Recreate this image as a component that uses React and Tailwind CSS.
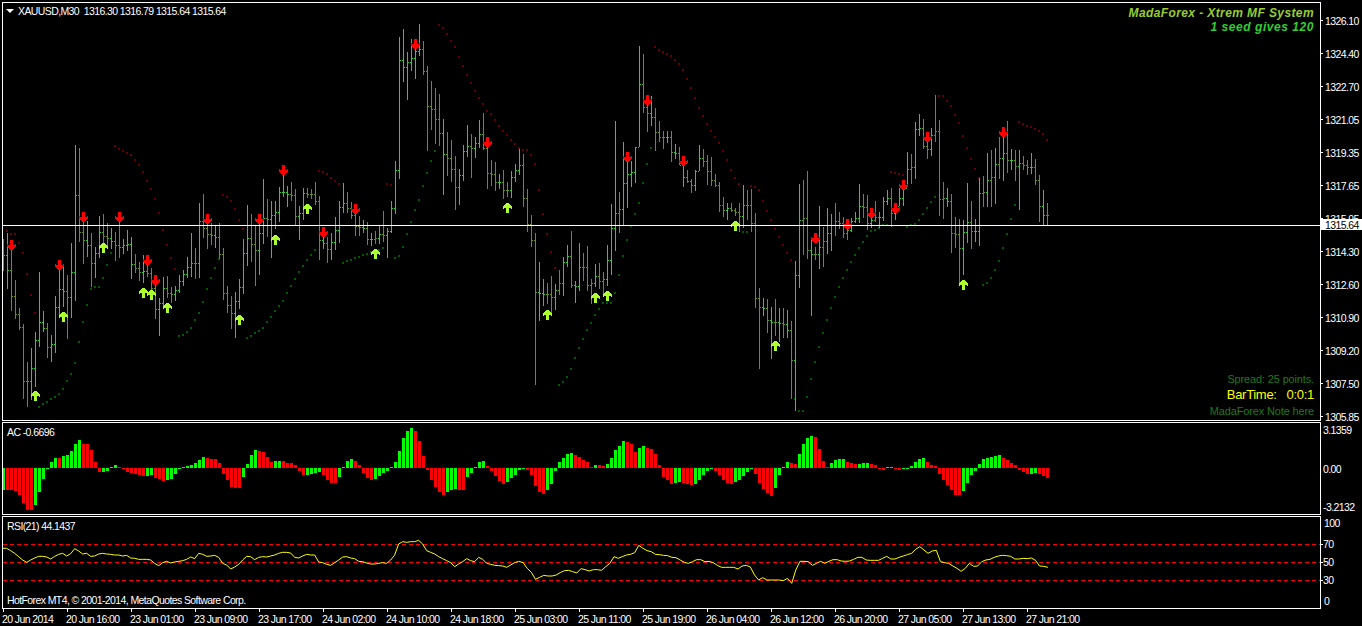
// MT4 chart: XAUUSD M30 with AC and RSI sub windows
const UP = '#32cd32';
const DOWN = '#6b8e23';

// high, low, up
const bars = [
  [239,271,0],[233,289,1],[250,311,0],[280,319,0],[308,330,0],[324,399,0],[362,407,0],[348,400,1],[332,387,1],[272,347,1],
  [311,332,1],[323,358,0],[335,362,1],[296,353,1],[270,317,1],[267,307,1],[275,339,0],[243,318,1],[145,301,1],[148,242,0],
  [222,264,0],[221,257,1],[233,287,0],[247,278,1],[216,258,1],[214,248,0],[223,248,0],[228,249,1],[232,261,0],[220,258,0],
  [239,254,1],[230,251,1],[237,279,1],[254,273,0],[262,281,0],[255,283,1],[265,277,0],[268,292,0],[284,319,0],[298,336,1],
  [277,307,1],[276,298,0],[287,303,0],[286,301,1],[275,293,1],[270,286,1],[257,278,1],[233,277,1],[248,279,0],[203,278,1],
  [194,238,0],[217,249,0],[223,245,0],[225,248,1],[223,259,0],[248,300,0],[286,313,0],[296,329,0],[292,338,1],[279,309,1],
  [239,294,1],[205,266,1],[214,262,0],[225,286,0],[222,275,1],[179,244,1],[199,237,0],[201,258,1],[201,229,1],[187,222,1],
  [175,197,1],[186,207,1],[182,201,0],[189,226,0],[206,240,1],[188,220,1],[188,198,0],[189,199,0],[182,205,0],[196,260,0],
  [230,249,1],[237,263,0],[233,260,1],[217,250,1],[201,243,1],[183,213,1],[192,213,0],[202,219,0],[210,236,0],[216,236,0],
  [220,233,1],[222,245,0],[233,246,1],[231,244,0],[225,244,1],[211,242,0],[228,258,1],[201,233,1],[161,214,1],[37,179,1],
  [29,82,1],[52,100,1],[39,71,1],[45,79,1],[24,56,1],[41,75,0],[66,151,0],[81,130,0],[88,144,0],[94,146,0],
  [119,195,1],[132,176,0],[140,182,0],[156,210,0],[169,205,1],[145,181,1],[125,157,1],[134,178,0],[137,158,1],[120,148,1],
  [113,150,0],[145,189,0],[160,186,0],[162,191,0],[174,189,1],[170,199,0],[182,197,0],[171,198,1],[164,182,1],[149,175,1],
  [154,207,0],[189,232,0],[215,247,0],[233,385,0],[262,321,1],[279,306,1],[283,304,0],[276,314,0],[284,310,1],[270,295,0],
  [257,296,1],[245,267,1],[231,288,0],[281,303,1],[243,291,1],[253,281,0],[246,291,0],[279,304,0],[264,287,1],[263,289,0],
  [272,294,0],[245,286,1],[204,275,1],[121,251,1],[192,233,0],[142,225,1],[157,208,1],[161,187,1],[147,183,1],[46,147,1],
  [54,113,0],[100,132,0],[96,126,1],[108,151,0],[121,142,0],[131,149,0],[131,143,1],[131,162,0],[144,159,1],[147,165,0],
  [165,187,1],[170,183,0],[179,193,0],[170,191,1],[145,171,1],[149,167,0],[155,185,0],[157,186,0],[174,187,0],[182,212,0],
  [197,217,0],[203,220,1],[203,212,0],[208,216,0],[203,232,0],[185,228,1],[190,220,0],[189,232,0],[213,308,0],[288,369,0],
  [298,316,1],[299,333,0],[307,359,1],[299,336,0],[308,342,1],[308,338,0],[310,338,1],[321,399,0],[261,411,1],[184,288,1],
  [180,255,0],[171,259,0],[240,316,1],[247,260,0],[206,269,1],[227,267,0],[208,254,1],[214,251,1],[203,236,0],[212,229,0],
  [217,238,0],[228,240,0],[218,232,1],[212,223,1],[184,223,1],[194,218,0],[195,230,0],[218,228,1],[201,222,0],[212,228,1],
  [197,221,1],[190,205,1],[188,227,0],[205,220,1],[188,206,1],[190,206,1],[152,185,1],[154,184,0],[122,179,1],[114,136,1],
  [119,149,0],[142,159,0],[128,156,1],[95,142,0],[120,216,0],[182,219,0],[188,207,1],[194,253,0],[217,248,0],[219,284,0],
  [220,275,1],[183,243,1],[201,249,0],[219,242,1],[178,246,1],[176,207,0],[153,207,1],[150,207,0],[148,204,1],[137,179,0],
  [133,181,1],[121,173,0],[149,170,1],[150,181,0],[150,210,1],[156,170,0],[160,175,0],[153,174,1],[159,185,0],[175,222,0],
  [190,226,1],[203,226,0],
];

// parabolic SAR, start index + values
const sar = [
  [1,'r',[230,233,233,242,252,273,294,312]],
  [9,'g',[406,403,401,398,396,393,388,380,373,362,341,321,304,288,286,286,277,264,252]],
  [28,'r',[145,148,150,152,154,159,164,171,180,188,198,212,229,244,257,268]],
  [44,'g',[335,334,331,327,319,312,301,288,277,267,258]],
  [55,'r',[194,196,200,208,219,228]],
  [61,'g',[337,335,332,330,327,321,316,310,305,300,292,285,278,271,265,259,254,249]],
  [79,'r',[170,171,173,177,180,183]],
  [85,'g',[262,260,259,257,256,254,253,251,250,249,247]],
  [96,'r',[183,184]],
  [98,'g',[257,255,246,233,221,209,199,185,172,160,150]],
  [109,'r',[24,27,33,40,46,56,65,74,82,90,97,103,110,113,119,125,130,134,139,143,147,149,149,154,163,189,213,233,251,267]],
  [139,'g',[384,381,376,368,357,347,338,329,322,314,308,302,302,302,292,274,255,239,225,213,202,182,163,147]],
  [163,'r',[46,49,51,53,55,59,63,69,78,87,97,107,115,123,130,136,142,150,159,169,177,183]],
  [185,'g',[231,231]],
  [187,'r',[185,186,189,200,210,219,228,236,244,252,259]],
  [198,'g',[398,410,410,396,378,361,346,332,319,307,296,286,277,269,261,254,247,241,235,230,229,227,224,224]],
  [222,'r',[171,172,173,174]],
  [226,'g',[226,224,223,219,213,207,201,196]],
  [234,'r',[95,95,100,105,114,122,135,147,158,168,177]],
  [245,'g',[284,282,277,269,260,247,233,218,204]],
  [254,'r',[121,123,125,126,128,130,133,139]],
];

const redArrows = [[11,240],[59,260],[83,212],[119,212],[147,255],[155,275],[207,214],[259,214],[323,227],[283,165],[415,39],[487,137],[627,152],[647,95],[355,204],[683,156],[903,180],[927,132],[1003,127],[895,203],[815,233],[847,219],[871,208]];
const limeArrows = [[35,391],[63,312],[103,243],[143,288],[151,290],[167,303],[239,315],[275,235],[307,204],[375,249],[547,310],[595,293],[607,291],[507,203],[735,221],[775,341],[963,280]];

// AC heights, measured on a 3x crop
const ac = [
  -65,-66,-67,-70,-82,-105,-126,-126,-111,-72,-33,-2,17,31,30,36,40,52,71,83,72,71,53,17,-12,-11,-10,4,8,3,
  -2,-12,-16,-18,-21,-24,-23,-22,-30,-34,-39,-36,-33,-18,-2,3,6,10,16,25,32,30,28,26,14,-17,-36,-56,-60,-61,
  -28,12,40,53,50,47,33,17,20,21,20,15,14,8,-10,-21,-20,-19,-14,-12,-22,-36,-46,-46,-28,2,20,28,22,10,
  -14,-30,-36,-33,-24,-15,-8,2,18,52,90,110,119,110,80,36,-6,-36,-56,-72,-82,-72,-65,-64,-65,-66,-28,-15,4,18,
  22,5,-10,-24,-39,-47,-42,-30,-20,-5,-4,-6,-21,-54,-72,-78,-66,-48,-10,18,30,42,45,38,32,25,18,2,9,8,
  6,12,30,53,66,80,78,72,48,60,66,60,57,42,9,-27,-36,-48,-45,-42,-45,-48,-50,-48,-36,-21,-9,-3,-9,-21,
  -36,-45,-48,-42,-36,-24,-12,-3,-18,-45,-63,-75,-84,-60,-20,1,18,15,12,42,72,90,96,93,57,21,2,15,24,27,
  28,18,15,12,13,15,16,12,9,-3,-5,2,3,-3,-5,-4,-3,6,18,27,30,18,9,6,-18,-36,-51,-66,-81,-81,
  -69,-45,-21,-9,12,27,30,33,36,39,30,24,15,9,-6,-12,-18,-17,-15,-18,-24,-30,
];

const rsiA = [385,385,392,400,410,420,427,420,414,409,409,411,417,409,403,400,408,401,386,393,402,400,409,408,402,400,402,403,405,405,408,406,414,415,418,418,418,420,430,437,428,424,429,426,424,422,418,411,416,400,403,409,408,406,412,430,435,447,441,433,420,409,410,419,412,410,411,408,405,400,397,397,399,412,414,408,403,405,405,426,428,433,436,428,420,411,410,414,416,424,425,429,432,432,430,428,430,420,405,372,365,367,365,365,361,372,392,397,402,410,416,422,428,440,432,425,416,422,425,412,418,430,433,436,437,438,442,435,428,424];
const rsiB = [428,445,457,478,472,466,468,468,465,458,452,451,455,459,446,449,453,449,449,451,440,430,410,415,410,405,403,398,376,385,392,395,403,404,406,407,412,413,420,427,430,425,419,419,425,424,428,436,442,442,442,442,447,438,436,441,465,480,473,480,480,480,480,482,475,490,450,424,424,425,436,430,424,430,424,419,419,423,424,423,418,412,412,420,421,421,421,415,409,417,417,412,408,404,400,388,380,390,400,393,391,425,428,430,438,445,454,445,430,439,438,425,420,418,412,408,406,407,409,417,417,415,416,414,421,438,439,442];

const rsiPoints = [
  ...rsiA.map((v, i) => `${(8 + 12 * i) / 3},${420 + v / 3}`),
  ...rsiB.map((v, i) => `${520 + (9 + 12 * i) / 2.904},${420 + v / 3}`),
].join(' ');

const priceLabels = ['1326.10','1324.40','1322.70','1321.05','1319.35','1317.65','1315.95','1314.30','1312.60','1310.90','1309.20','1307.50','1305.85'];
const timeLabels = ['20 Jun 2014','20 Jun 16:00','23 Jun 01:00','23 Jun 09:00','23 Jun 17:00','24 Jun 02:00','24 Jun 10:00','24 Jun 18:00','25 Jun 03:00','25 Jun 11:00','25 Jun 19:00','26 Jun 04:00','26 Jun 12:00','26 Jun 20:00','27 Jun 05:00','27 Jun 13:00','27 Jun 21:00'];
const rsiLabels = [
  { text: '100', className: 'mt-0 pl-[3px]', tick: false },
  { text: '70', className: 'mt-[7px]', tick: true },
  { text: '50', className: 'mt-[4px]', tick: true },
  { text: '30', className: 'mt-[4px]', tick: true },
  { text: '0', className: 'mt-[7px] pl-[3px]', tick: false },
];

const Head = [3, 5, 7, 9, 9];

function Arrow({ cx, top, color, flip }) {
  const rowY = (r) => (flip ? top + 9 - r : top + r);
  return (
    <g fill={color}>
      {Head.map((w, r) => (
        <rect key={r} x={cx - (w - 1) / 2} y={rowY(r)} width={w} height={1} />
      ))}
      {/* notched foot of the head */}
      <rect x={cx - 4} y={rowY(5)} width={1} height={1} />
      <rect x={cx + 4} y={rowY(5)} width={1} height={1} />
      <rect x={cx - 1} y={flip ? top : top + 4} width={3} height={6} />
    </g>
  );
}

function PriceChart() {
  return (
    <svg viewBox="3 3 1317 417" className="block w-full h-full" shapeRendering="crispEdges">
      {sar.map(([start, kind, values]) =>
        values.map((y, i) => (
          <rect key={`${start}-${i}`} x={2 + 4 * (start + i)} y={y} width={2} height={2} fill={kind === 'r' ? '#640000' : '#005a00'} />
        ))
      )}
      {bars.map(([high, low, up], i) => {
        const x = 3 + 4 * i;
        const color = up ? UP : DOWN;
        const next = bars[i + 1] || bars[i];
        const prev = bars[i - 1] || bars[i];
        const close = Math.round((Math.max(high, next[0]) + Math.min(low, next[1])) / 2);
        const open = Math.round((Math.max(high, prev[0]) + Math.min(low, prev[1])) / 2);
        return (
          <g key={i} fill={color}>
            <rect x={x} y={high} width={1} height={low - high} />
            <rect x={x + 1} y={close} width={1} height={1} />
            <rect x={x - 1} y={open} width={1} height={1} />
          </g>
        );
      })}
      {redArrows.map(([cx, top]) => (
        <Arrow key={`${cx}-${top}`} cx={cx} top={top} color="#ff0000" flip />
      ))}
      {limeArrows.map(([cx, top]) => (
        <Arrow key={`${cx}-${top}`} cx={cx} top={top} color="#adff2f" />
      ))}
      <rect x={3} y={225} width={1317} height={1} fill="#ffffff" />
    </svg>
  );
}

function AcChart() {
  return (
    <svg viewBox="3 423 1317 91" className="block w-full h-full" shapeRendering="crispEdges">
      {ac.map((v, i) => {
        const h = Math.max(1, Math.round(Math.abs(v) / 3));
        const rising = i === 0 || v > ac[i - 1];
        return (
          <rect key={i} x={2 + 4 * i} y={v > 0 ? 468 - h : 468} width={3} height={h} fill={rising ? '#00ff00' : '#ff0000'} />
        );
      })}
    </svg>
  );
}

function RsiChart() {
  return (
    <svg viewBox="3 517 1317 91" className="block w-full h-full">
      {[544.5, 562.5, 580.5].map((y) => (
        <line key={y} x1={3} x2={1320} y1={y} y2={y} stroke="#ff0000" strokeWidth={1} strokeDasharray="4 3" />
      ))}
      <polyline points={rsiPoints} fill="none" stroke="#ffff00" strokeWidth={1} />
    </svg>
  );
}

function Tick() {
  return <span className="w-[2px] h-px bg-white shrink-0" />;
}

export default function App() {
  return (
    <div className="w-[1362px] h-[626px] overflow-hidden bg-black pt-[2px] pl-[2px] text-white text-[10.5px] leading-[14px] tracking-[-0.6px] font-['Liberation_Sans',sans-serif]">
      {/* main window */}
      <div className="flex h-[419px]">
        <div className="relative w-[1319px] h-full border border-white">
          <PriceChart />
          <div className="absolute left-[3px] top-0 flex items-center h-[15px] gap-[4px]">
            <span className="w-0 h-0 border-x-[4px] border-x-transparent border-t-[4px] border-t-white" />
            <span className="whitespace-pre">XAUUSD,M30  1316.30 1316.79 1315.64 1315.64</span>
          </div>
          <div className="absolute right-[6px] top-[3px] flex flex-col items-end font-bold italic text-[12px] tracking-[0.4px]">
            <span className="text-[#9acd32]">MadaForex - Xtrem MF System</span>
            <span className="text-[#32cd32] tracking-[0.55px]">1 seed gives 120</span>
          </div>
          <div className="absolute right-[6px] bottom-[1px] flex flex-col items-end leading-[16px]">
            <span className="text-[#1f7a1f] text-[11px] tracking-[-0.15px]">Spread: 25 points.</span>
            <span className="text-[#ffff00] text-[13px] tracking-[-0.3px] whitespace-pre">BarTime:   0:0:1</span>
            <span className="text-[#1f7a1f] text-[11px] tracking-[-0.15px]">MadaForex Note here</span>
          </div>
        </div>
        <div className="relative flex-1 flex flex-col pt-[2px]">
          {priceLabels.map((p) => (
            <div key={p} className="flex items-center gap-[2px] h-[33px] shrink-0">
              <Tick />
              <span>{p}</span>
            </div>
          ))}
          <div className="absolute left-0 top-[217px] w-[41px] h-[11px] flex items-center pl-[4px] bg-white text-black">1315.64</div>
        </div>
      </div>

      {/* AC window */}
      <div className="flex h-[93px] mt-px">
        <div className="relative w-[1319px] h-full border border-white">
          <AcChart />
          <span className="absolute left-[4px] top-[2px]">AC -0.6696</span>
        </div>
        <div className="flex-1 flex flex-col justify-between py-px pl-[2px]">
          <span>3.1359</span>
          <span>0.00</span>
          <span>-3.2132</span>
        </div>
      </div>

      {/* RSI window */}
      <div className="flex h-[93px] mt-px">
        <div className="relative w-[1319px] h-full border border-white">
          <RsiChart />
          <span className="absolute left-[4px] top-[2px]">RSI(21) 44.1437</span>
          <span className="absolute left-[4px] bottom-[1px]">HotForex MT4, © 2001-2014, MetaQuotes Software Corp.</span>
        </div>
        <div className="flex-1 flex flex-col">
          {rsiLabels.map((l) => (
            <div key={l.text} className={`flex items-center h-[14px] ${l.className}`}>
              {l.tick && <Tick />}
              <span>{l.text}</span>
            </div>
          ))}
        </div>
      </div>

      {/* time axis */}
      <div className="flex pl-px">
        {timeLabels.map((t) => (
          <div key={t} className="w-[64px] shrink-0 flex flex-col items-start">
            <span className="w-px h-[3px] bg-white" />
            <span className="whitespace-nowrap -ml-px">{t}</span>
          </div>
        ))}
      </div>
    </div>
  );
}
